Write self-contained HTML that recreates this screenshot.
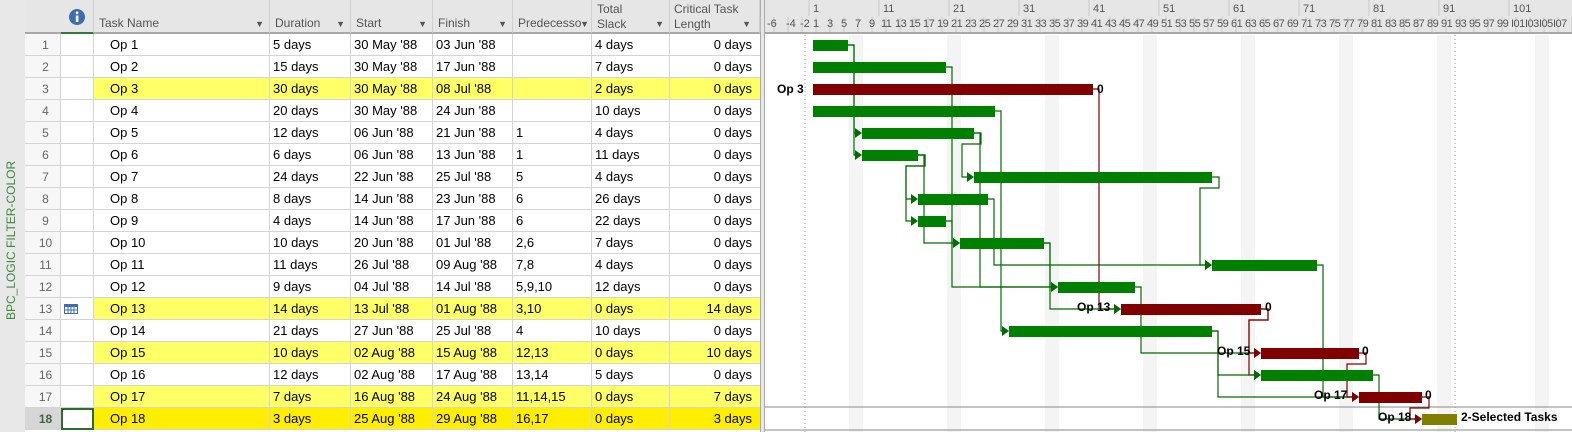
<!DOCTYPE html>
<html><head><meta charset="utf-8"><style>
*{margin:0;padding:0;box-sizing:border-box}
body{width:1572px;height:432px;overflow:hidden;background:#fff;font-family:"Liberation Sans",sans-serif;font-size:13px;color:#000;position:relative}
.abs{position:absolute}
.hdr{position:absolute;top:0;height:34px;background:#e6e6e6;border-right:1px solid #d0d0d0;border-bottom:2px solid #a8a8a8;color:#555;font-size:12px}
.cell{position:absolute;height:22px;line-height:22px;border-right:1px solid #d4d4d4;border-bottom:1px solid #d4d4d4;white-space:nowrap;overflow:hidden;padding-left:3px}
.arr{position:absolute;right:5px;top:19px;font-size:9px;color:#555}
</style></head><body>
<div class="abs" style="left:0;top:0;width:25px;height:432px;background:#e8e8e8"></div>
<div class="abs" style="left:4px;top:320px;transform:rotate(-90deg);transform-origin:0 0;color:#3a8a3a;font-size:12px;white-space:nowrap;width:200px">BPC_LOGIC FILTER-COLOR</div>
<div class="hdr" style="left:25px;width:36px;border-right:none"></div>
<div class="hdr" style="left:61px;width:33px;border-bottom:2px solid #2e7d32"><svg class="abs" style="left:7px;top:8px" width="18" height="18"><circle cx="9" cy="9" r="8" fill="#3b6fb0"/><rect x="7.8" y="7.5" width="2.6" height="6.5" fill="#fff"/><circle cx="9.1" cy="4.8" r="1.4" fill="#fff"/></svg></div>
<div class="hdr" style="left:94px;width:176px"><span class="abs" style="left:5px;top:16px">Task Name</span><span class="arr">▼</span></div>
<div class="hdr" style="left:270px;width:81px"><span class="abs" style="left:5px;top:16px">Duration</span><span class="arr">▼</span></div>
<div class="hdr" style="left:351px;width:82px"><span class="abs" style="left:5px;top:16px">Start</span><span class="arr">▼</span></div>
<div class="hdr" style="left:433px;width:80px"><span class="abs" style="left:5px;top:16px">Finish</span><span class="arr">▼</span></div>
<div class="hdr" style="left:513px;width:79px"><span class="abs" style="left:5px;top:16px">Predecesso</span><span class="arr" style="right:2px">▼</span></div>
<div class="hdr" style="left:592px;width:78px"><span class="abs" style="left:5px;top:2px;line-height:15px">Total<br>Slack</span><span class="arr">▼</span></div>
<div class="hdr" style="left:670px;width:90px"><span class="abs" style="left:4px;top:2px;line-height:15px">Critical Task<br>Length</span><span class="arr" style="right:8px">▼</span></div>
<div class="abs" style="left:760px;top:0;width:5px;height:432px;background:#e6e6e6;border-left:1px solid #aaa;border-right:1px solid #aaa"></div>
<div id="grid"></div>
<svg class="abs" style="left:0;top:0" width="1572" height="432">
<rect x="765" y="0" width="807" height="33" fill="#e6e6e6"/>
<line x1="765" y1="33" x2="1572" y2="33" stroke="#a8a8a8" stroke-width="2"/>
<g id="ts" font-family="Liberation Sans" font-size="11" fill="#555"></g>
<g id="stripes"></g>
<line x1="805" y1="35" x2="805" y2="432" stroke="#999" stroke-dasharray="1,3"/>
<line x1="1455" y1="35" x2="1455" y2="432" stroke="#999" stroke-dasharray="1,3"/>
<line x1="765" y1="407" x2="1572" y2="407" stroke="#888"/>
<line x1="765" y1="430" x2="1572" y2="430" stroke="#888"/>
<g id="links" fill="none" stroke-width="1.2"></g>
<g id="bars"></g>
<g font-family="Liberation Sans" font-size="12" font-weight="bold" fill="#000">
<text x="777" y="93">Op 3</text><text x="1097" y="93">0</text>
<text x="1077" y="311">Op 13</text><text x="1265" y="311">0</text>
<text x="1217" y="355">Op 15</text><text x="1362" y="355">0</text>
<text x="1314" y="399">Op 17</text><text x="1425" y="399">0</text>
<text x="1378" y="421">Op 18</text><text x="1461" y="421">2-Selected Tasks</text>
</g>
</svg>
<script>
(function(){
var rows=[["Op 1","5 days","30 May '88","03 Jun '88","","4 days","0 days",0,5],
["Op 2","15 days","30 May '88","17 Jun '88","","7 days","0 days",0,19],
["Op 3","30 days","30 May '88","08 Jul '88","","2 days","0 days",0,40],
["Op 4","20 days","30 May '88","24 Jun '88","","10 days","0 days",0,26],
["Op 5","12 days","06 Jun '88","21 Jun '88","1","4 days","0 days",7,16],
["Op 6","6 days","06 Jun '88","13 Jun '88","1","11 days","0 days",7,8],
["Op 7","24 days","22 Jun '88","25 Jul '88","5","4 days","0 days",23,34],
["Op 8","8 days","14 Jun '88","23 Jun '88","6","26 days","0 days",15,10],
["Op 9","4 days","14 Jun '88","17 Jun '88","6","22 days","0 days",15,4],
["Op 10","10 days","20 Jun '88","01 Jul '88","2,6","7 days","0 days",21,12],
["Op 11","11 days","26 Jul '88","09 Aug '88","7,8","4 days","0 days",57,15],
["Op 12","9 days","04 Jul '88","14 Jul '88","5,9,10","12 days","0 days",35,11],
["Op 13","14 days","13 Jul '88","01 Aug '88","3,10","0 days","14 days",44,20],
["Op 14","21 days","27 Jun '88","25 Jul '88","4","10 days","0 days",28,29],
["Op 15","10 days","02 Aug '88","15 Aug '88","12,13","0 days","10 days",64,14],
["Op 16","12 days","02 Aug '88","17 Aug '88","13,14","5 days","0 days",64,16],
["Op 17","7 days","16 Aug '88","24 Aug '88","11,14,15","0 days","7 days",78,9],
["Op 18","3 days","25 Aug '88","29 Aug '88","16,17","0 days","3 days",87,5]];
var crit={3:1,13:1,15:1,17:1,18:1};
var cols=[[94,176],[270,81],[351,82],[433,80],[513,79],[592,78],[670,90]];
var h="";
function rowTop(i){return 34+i*22;}
rows.forEach(function(r,i){
 var n=i+1,t=rowTop(i),bg=n==18?"#ffee00":(crit[n]?"#ffff66":"#fff");
 h+='<div class="cell" style="left:25px;top:'+t+'px;width:36px;background:'+(n==18?"#d6d6d6":"#f7f7f7")+';color:'+(n==18?"#3a6a3a":"#666")+';font-weight:'+(n==18?"bold":"normal")+';text-align:center;padding:0 0 0 6px;font-size:12px">'+n+'</div>';
 h+='<div class="cell" style="left:61px;top:'+t+'px;width:33px;background:#fff;'+(n==18?"border:2px solid #2e6b2e;":"")+'">'+(n==13?'<svg style="position:absolute;left:3px;top:6px" width="14" height="10"><rect x="0.5" y="0.5" width="13" height="9" fill="#fff" stroke="#3b6fb0"/><rect x="0.5" y="0.5" width="13" height="2.5" fill="#3b6fb0"/><path d="M4 3V10M7 3V10M10 3V10M0 6H14" stroke="#3b6fb0"/></svg>':'')+'</div>';
 var vals=[r[0],r[1],r[2],r[3],r[4],r[5],r[6]];
 cols.forEach(function(c,j){
  var st='left:'+c[0]+'px;top:'+t+'px;width:'+c[1]+'px;background:'+bg+';';
  if(j==0)st+='padding-left:16px;';
  if(j==6)st+='text-align:right;padding-right:8px;border-right:none;';
  h+='<div class="cell" style="'+st+'">'+vals[j]+'</div>';
 });
});
document.getElementById("grid").innerHTML=h;
function X(d){return 813+7*d;}
function cy(i){return rowTop(i)+11;}
var ts="";
for(var k=0;k<=11;k++){var x=X(k*10)-4;ts+='<line x1="'+x+'" y1="0" x2="'+x+'" y2="16" stroke="#c8c8c8"/><text x="'+(x+4)+'" y="12">'+(1+k*10)+'</text>';}
for(var d=-7;d<=110;d+=2){var x2=X(d)-4;ts+='<line x1="'+x2+'" y1="17" x2="'+x2+'" y2="32" stroke="#c8c8c8"/>';}
[[-6,767],[-4,786],[-2,800]].forEach(function(l){ts+='<text x="'+l[1]+'" y="27">'+l[0]+'</text>';});
for(var d2=1;d2<=107;d2+=2){var s=String(d2);if(d2>=100)s='I'+s.slice(1);ts+='<text x="'+(X(d2-1)+(d2>=10?-2:0))+'" y="27" letter-spacing="-0.5">'+s+'</text>';}
document.getElementById("ts").innerHTML=ts;
var sp="";for(var sx=849;sx<1572;sx+=98)sp+='<rect x="'+sx+'" y="35" width="14" height="397" fill="#f4f4f4"/>';
document.getElementById("stripes").innerHTML=sp;
var b="";
rows.forEach(function(r,i){var n=i+1,c=n==18?"#808000":(crit[n]?"#800000":"#008000");
 b+='<rect x="'+X(r[7])+'" y="'+(cy(i)-5)+'" width="'+(7*r[8])+'" height="11" fill="'+c+'"/>';});
var preds={5:[1],6:[1],7:[5],8:[6],9:[6],10:[2,6],11:[7,8],12:[5,9,10],13:[3,10],14:[4],15:[12,13],16:[13,14],17:[11,14,15],18:[16,17]};
var L="";
Object.keys(preds).forEach(function(k){var sI=+k;preds[k].forEach(function(p){
 var e=X(rows[p-1][7]+rows[p-1][8]),y1=cy(p-1),st=X(rows[sI-1][7]),y2=cy(sI-1);
 var col=crit[p]?"#800000":"#006b00",d;
 if(st-e>=13){d='M'+e+' '+y1+'H'+(e+6)+'V'+y2+'H'+(st-6);}
 else{d='M'+e+' '+y1+'H'+(e+7)+'V'+(y1+11)+'H'+(st-12)+'V'+y2+'H'+(st-6);}
 L+='<path d="'+d+'" stroke="'+col+'"/><path d="M'+(st-7)+' '+(y2-5)+'L'+st+' '+y2+'L'+(st-7)+' '+(y2+5)+'Z" fill="'+col+'" stroke="none"/>';
});});
document.getElementById("links").innerHTML=L;
document.getElementById("bars").innerHTML=b;
})();
</script>
</body></html>
